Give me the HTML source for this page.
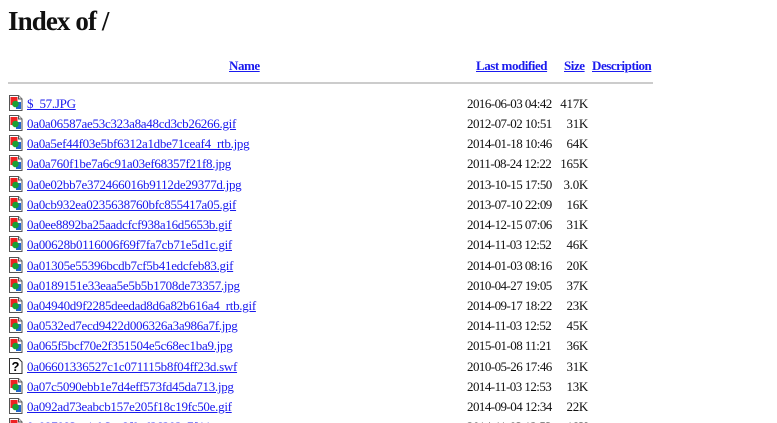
<!DOCTYPE html>
<html><head><meta charset="utf-8"><style>
html,body{margin:0;padding:0;background:#fff;width:777px;height:423px;overflow:hidden;font-family:"Liberation Serif",serif;color:#111}
#w{position:relative;width:777px;height:423px;overflow:hidden}
h1{position:absolute;left:8px;top:6px;margin:0;font-size:27px;font-weight:bold;letter-spacing:-0.9px}
a{color:#1a1aee;text-decoration:underline}
.h{position:absolute;top:58px;font-size:13px;font-weight:bold;letter-spacing:-0.45px}
hr{position:absolute;left:8px;top:82px;width:645px;margin:0;border:0;border-top:2px solid #ccc}
.r{position:absolute;left:0;height:20px;font-size:13px;width:777px}
.r svg{position:absolute;left:8px;top:-8px}
.r .n{position:absolute;left:27px;top:-7px;letter-spacing:-0.28px}
.r .d{position:absolute;left:467px;top:-7px;letter-spacing:-0.55px}
.r .s{position:absolute;right:189px;top:-7px;letter-spacing:-0.3px}
</style></head><body><div id="w">
<h1>Index of /</h1>
<a class="h" style="left:229px">Name</a>
<a class="h" style="left:476px">Last modified</a>
<a class="h" style="left:564px">Size</a>
<a class="h" style="left:592px">Description</a>
<hr>
<svg width="0" height="0" style="position:absolute"><defs>
<g id="img"><path d="M1.5 .5h9l3.5 3.5v11.5h-12.5z" fill="#fff" stroke="#555"/><path d="M10.5 .5v3.5h3.5" fill="#ddd" stroke="#555"/><rect x="2.5" y="2" width="7" height="8" fill="#e22"/><rect x="8" y="7" width="5" height="7" fill="#2266cc"/><circle cx="7.5" cy="9" r="3.3" fill="#19a034"/></g>
<g id="unk"><path d="M1.5 .5h9l3.5 3.5v11.5h-12.5z" fill="#fff" stroke="#333"/><text x="7.5" y="13" font-family="Liberation Sans" font-weight="bold" font-size="13" text-anchor="middle" fill="#000">?</text></g>
</defs></svg>
<div class="r" style="top:103px"><svg width="16" height="16"><use href="#img"/></svg><a class="n">$_57.JPG</a><span class="d">2016-06-03 04:42</span><span class="s">417K</span></div>
<div class="r" style="top:123px"><svg width="16" height="16"><use href="#img"/></svg><a class="n">0a0a06587ae53c323a8a48cd3cb26266.gif</a><span class="d">2012-07-02 10:51</span><span class="s">31K</span></div>
<div class="r" style="top:143px"><svg width="16" height="16"><use href="#img"/></svg><a class="n">0a0a5ef44f03e5bf6312a1dbe71ceaf4_rtb.jpg</a><span class="d">2014-01-18 10:46</span><span class="s">64K</span></div>
<div class="r" style="top:163px"><svg width="16" height="16"><use href="#img"/></svg><a class="n">0a0a760f1be7a6c91a03ef68357f21f8.jpg</a><span class="d">2011-08-24 12:22</span><span class="s">165K</span></div>
<div class="r" style="top:184px"><svg width="16" height="16"><use href="#img"/></svg><a class="n">0a0e02bb7e372466016b9112de29377d.jpg</a><span class="d">2013-10-15 17:50</span><span class="s">3.0K</span></div>
<div class="r" style="top:204px"><svg width="16" height="16"><use href="#img"/></svg><a class="n">0a0cb932ea0235638760bfc855417a05.gif</a><span class="d">2013-07-10 22:09</span><span class="s">16K</span></div>
<div class="r" style="top:224px"><svg width="16" height="16"><use href="#img"/></svg><a class="n">0a0ee8892ba25aadcfcf938a16d5653b.gif</a><span class="d">2014-12-15 07:06</span><span class="s">31K</span></div>
<div class="r" style="top:244px"><svg width="16" height="16"><use href="#img"/></svg><a class="n">0a00628b0116006f69f7fa7cb71e5d1c.gif</a><span class="d">2014-11-03 12:52</span><span class="s">46K</span></div>
<div class="r" style="top:265px"><svg width="16" height="16"><use href="#img"/></svg><a class="n">0a01305e55396bcdb7cf5b41edcfeb83.gif</a><span class="d">2014-01-03 08:16</span><span class="s">20K</span></div>
<div class="r" style="top:285px"><svg width="16" height="16"><use href="#img"/></svg><a class="n">0a0189151e33eaa5e5b5b1708de73357.jpg</a><span class="d">2010-04-27 19:05</span><span class="s">37K</span></div>
<div class="r" style="top:305px"><svg width="16" height="16"><use href="#img"/></svg><a class="n">0a04940d9f2285deedad8d6a82b616a4_rtb.gif</a><span class="d">2014-09-17 18:22</span><span class="s">23K</span></div>
<div class="r" style="top:325px"><svg width="16" height="16"><use href="#img"/></svg><a class="n">0a0532ed7ecd9422d006326a3a986a7f.jpg</a><span class="d">2014-11-03 12:52</span><span class="s">45K</span></div>
<div class="r" style="top:345px"><svg width="16" height="16"><use href="#img"/></svg><a class="n">0a065f5bcf70e2f351504e5c68ec1ba9.jpg</a><span class="d">2015-01-08 11:21</span><span class="s">36K</span></div>
<div class="r" style="top:366px"><svg width="16" height="16"><use href="#unk"/></svg><a class="n">0a06601336527c1c071115b8f04ff23d.swf</a><span class="d">2010-05-26 17:46</span><span class="s">31K</span></div>
<div class="r" style="top:386px"><svg width="16" height="16"><use href="#img"/></svg><a class="n">0a07c5090ebb1e7d4eff573fd45da713.jpg</a><span class="d">2014-11-03 12:53</span><span class="s">13K</span></div>
<div class="r" style="top:406px"><svg width="16" height="16"><use href="#img"/></svg><a class="n">0a092ad73eabcb157e205f18c19fc50e.gif</a><span class="d">2014-09-04 12:34</span><span class="s">22K</span></div>
<div class="r" style="top:426px"><svg width="16" height="16"><use href="#img"/></svg><a class="n">0a097093ee1ab3ec8f0ad26202a7f4.jpg</a><span class="d">2014-11-03 12:53</span><span class="s">18K</span></div>
</div></body></html>
